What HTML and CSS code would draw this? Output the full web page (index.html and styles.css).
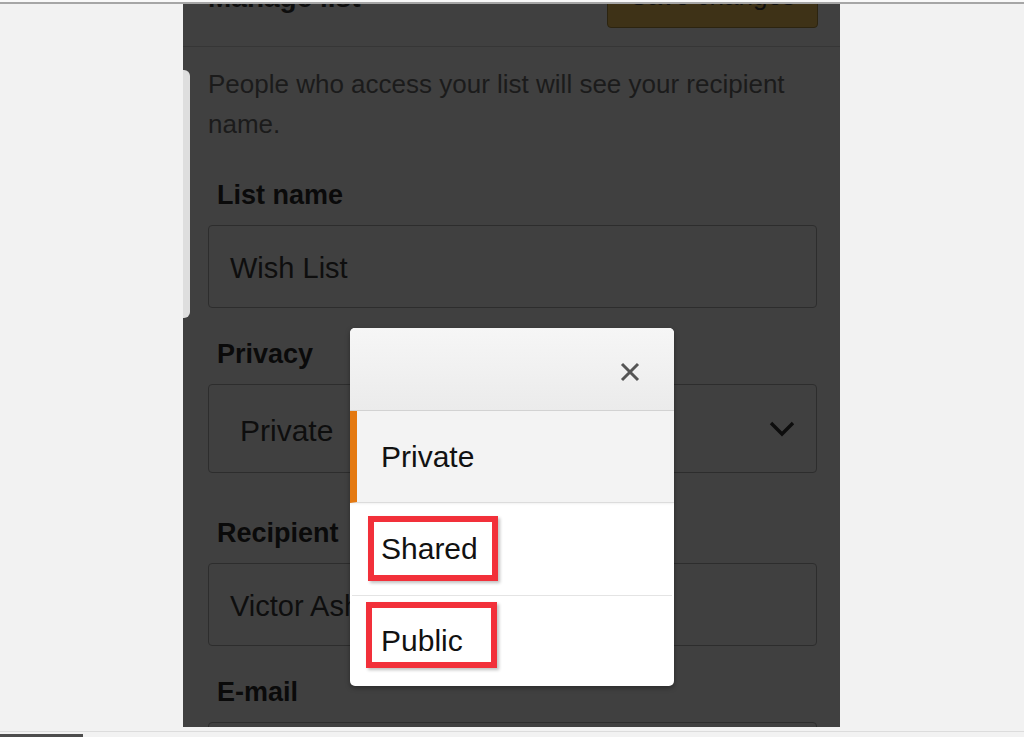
FILE: index.html
```html
<!DOCTYPE html>
<html lang="en">
<head>
<meta charset="utf-8">
<title>Manage list</title>
<link rel="stylesheet" href="styles.css">
</head>
<body>
<div class="topline"></div>
<div class="stage">
  <main class="panel">
    <header class="bar">
      <h1 class="title">Manage list</h1>
      <button class="save" type="button">Save changes</button>
    </header>
    <div class="form">
      <p class="desc">People who access your list will see your recipient name.</p>
      <div class="field first">
        <div class="label">List name</div>
        <div class="box">Wish List</div>
      </div>
      <div class="field">
        <div class="label">Privacy</div>
        <div class="box select">
          <span class="select-text">Private</span>
          <svg class="chevron" width="26" height="16" viewBox="0 0 26 16"><polyline points="2,2 13,13 24,2" fill="none" stroke="#0d0d0d" stroke-width="3.4" stroke-linejoin="miter"/></svg>
        </div>
      </div>
      <div class="field after-select">
        <div class="label">Recipient</div>
        <div class="box">Victor Ashiedu</div>
      </div>
      <div class="field">
        <div class="label">E-mail</div>
        <div class="box"></div>
      </div>
    </div>
    <div class="scroll-tab"></div>
    <div class="modal">
      <div class="modal-head">
        <svg class="close" width="20" height="20" viewBox="0 0 20 20"><path d="M2 2 L18 18 M18 2 L2 18" stroke="#555" stroke-width="3" fill="none"/></svg>
      </div>
      <div class="option selected">Private</div>
      <div class="option shared">Shared</div>
      <div class="option public">Public</div>
      <div class="mark mark-shared"></div>
      <div class="mark mark-public"></div>
    </div>
  </main>
</div>
<div class="footer">
  <div class="footer-line"></div>
  <div class="taskbar"></div>
</div>
</body>
</html>
```
FILE: styles.css
```css
* { box-sizing: border-box; }

html, body {
  margin: 0;
  padding: 0;
}

body {
  background: #f2f2f2;
  font-family: "Liberation Sans", Arial, sans-serif;
  width: 1024px;
  height: 737px;
  overflow: hidden;
}

.topline {
  height: 4px;
  background: #f9f9f9;
  border-bottom: 2px solid #a6a6a6;
}

.stage {
  height: 723px;
  display: flex;
}

.panel {
  position: relative;
  margin-left: 183px;
  width: 657px;
  height: 723px;
  background: #404040;
  overflow: hidden;
}

.bar {
  height: 43px;
  border-bottom: 1px solid #363636;
  display: flex;
  justify-content: space-between;
  align-items: flex-start;
  padding: 0 22px 0 25px;
}

.title {
  margin: -22px 0 0 0;
  font-size: 28px;
  line-height: 32px;
  font-weight: bold;
  color: #0d0d0d;
}

.save {
  margin-top: -26px;
  width: 211px;
  height: 50px;
  background: #3e3217;
  border: 1px solid #2c2410;
  border-radius: 4px;
  font-family: inherit;
  font-size: 26px;
  line-height: 30px;
  color: #0f0f0f;
  display: flex;
  align-items: flex-end;
  justify-content: center;
  padding: 0 0 16px 0;
}

.form {
  padding: 0 23px 0 25px;
}

.desc {
  margin: 17px 0 0 0;
  font-size: 26px;
  line-height: 40px;
  color: #1b1b1b;
}

.field { margin-top: 30px; }
.field.first { margin-top: 35px; }
.field.after-select { margin-top: 44px; }

.label {
  padding-left: 9px;
  font-size: 27px;
  line-height: 32px;
  font-weight: bold;
  color: #0a0a0a;
  white-space: nowrap;
}

.box {
  margin-top: 14px;
  height: 83px;
  border: 1px solid #2d2d2d;
  border-radius: 4px;
  display: flex;
  align-items: center;
  padding: 4px 0 0 21px;
  font-size: 29px;
  line-height: 29px;
  color: #0e0e0e;
  white-space: nowrap;
  overflow: hidden;
}

.box.select {
  height: 89px;
  padding-left: 31px;
  padding-right: 21px;
  justify-content: space-between;
  font-size: 30px;
}

.chevron { margin-top: -4px; }

.scroll-tab {
  position: absolute;
  left: 0;
  top: 66px;
  width: 7px;
  height: 248px;
  background: #dedede;
  border-radius: 0 6px 6px 0;
}

.modal {
  position: absolute;
  left: 167px;
  top: 324px;
  width: 324px;
  height: 358px;
  background: #ffffff;
  border-radius: 5px;
  box-shadow: 0 2px 5px rgba(0, 0, 0, 0.35);
  overflow: hidden;
}

.modal-head {
  height: 83px;
  background: linear-gradient(#f6f6f6, #ebebeb);
  border-bottom: 1px solid #d3d3d3;
  display: flex;
  justify-content: flex-end;
  align-items: center;
  padding: 6px 34px 0 0;
}

.option {
  display: flex;
  align-items: center;
  padding-left: 31px;
  font-size: 30px;
  line-height: 30px;
  color: #111111;
}

.option.selected {
  height: 92px;
  background: #f3f3f3;
  border-left: 7px solid #e47911;
  padding-left: 24px;
  border-bottom: 1px solid #dcdcdc;
  box-shadow: 0 1px 2px rgba(0, 0, 0, 0.06);
}

.option.shared {
  height: 93px;
  margin: 0 2px;
  padding-left: 29px;
  border-bottom: 1px solid #e4e4e4;
}

.option.public {
  height: 90px;
}

.mark {
  position: absolute;
  border: 6px solid #f2303a;
  box-shadow: 2px 2px 3px rgba(0, 0, 0, 0.25);
}

.mark-shared {
  left: 18px;
  top: 188px;
  width: 130px;
  height: 65px;
}

.mark-public {
  left: 16px;
  top: 274px;
  width: 131px;
  height: 66px;
}

.footer {
  height: 10px;
  background: #f2f2f2;
  padding-top: 4px;
}

.footer-line {
  height: 1px;
  background: #dcdcdc;
}

.taskbar {
  margin-top: 2px;
  width: 83px;
  height: 3px;
  background: #4d4d4d;
}
```
